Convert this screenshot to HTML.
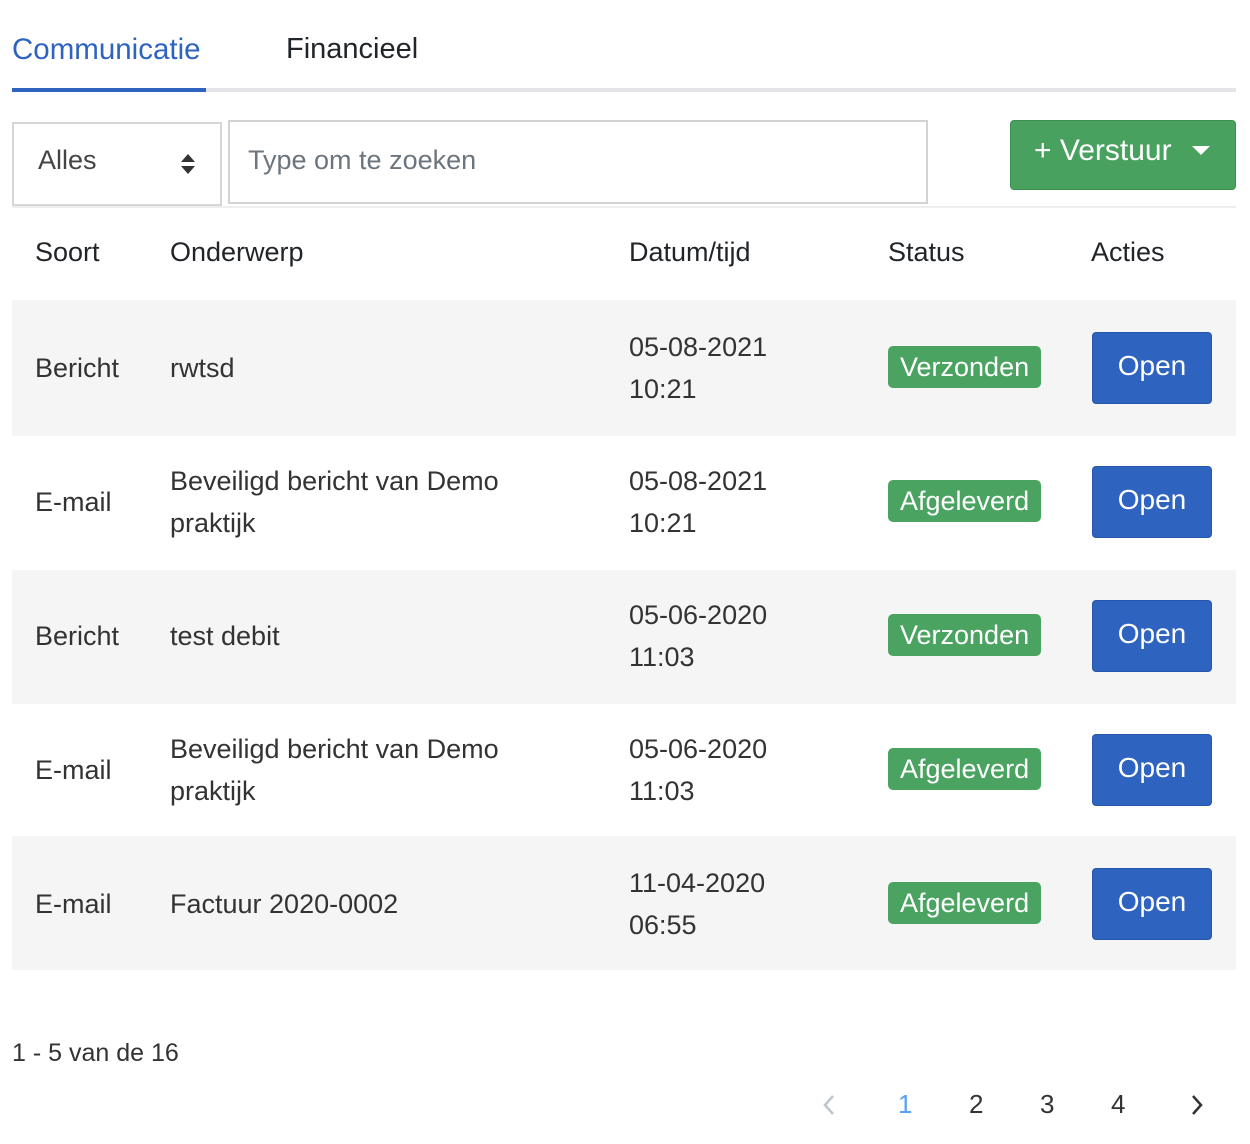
<!DOCTYPE html>
<html><head><meta charset="utf-8"><style>
*{box-sizing:border-box;margin:0;padding:0}
body{width:1250px;height:1144px;background:#fff;font-family:"Liberation Sans",sans-serif;color:#212529;position:relative;overflow:hidden}
.a{position:absolute;white-space:nowrap}
.t{font-size:27px}
.row{position:absolute;left:12px;width:1224px;height:134px}
.g{background:#f5f5f5}
.badge{position:absolute;left:888px;height:42px;background:#4aa361;color:#fff;font-size:27px;border-radius:5px;padding:0 12px;line-height:42px}
.btn{position:absolute;left:1092px;width:120px;height:72px;background:#2e63bf;border:1px solid #2457ad;border-radius:4px;color:#fff;font-size:28px;text-align:center;line-height:66px}
</style></head><body>
<div class="a t" style="left:12px;top:33px;color:#2e63bf;font-size:29.5px">Communicatie</div>
<div class="a t" style="left:286px;top:33px;font-size:29px">Financieel</div>
<div class="a" style="left:12px;top:88px;width:1224px;height:4px;background:#e3e5e8"></div>
<div class="a" style="left:12px;top:88px;width:194px;height:4px;background:#2e63bf"></div>

<div class="a" style="left:12px;top:122px;width:210px;height:84px;border:2px solid #d6d6d6"></div>
<div class="a t" style="left:38px;top:145px;color:#444">Alles</div>
<svg class="a" style="left:179px;top:153px" width="18" height="22"><path d="M2 9 L9 1 L16 9Z M2 13 L9 21 L16 13Z" fill="#333"/></svg>
<div class="a" style="left:228px;top:120px;width:700px;height:84px;border:2px solid #d3d3d3"></div>
<div class="a t" style="left:248px;top:145px;color:#6c757d">Type om te zoeken</div>
<div class="a" style="left:1010px;top:120px;width:226px;height:70px;background:#48a15e;border:1px solid #3d8f52;border-radius:4px"></div>
<div class="a" style="left:1034px;top:134px;color:#fff;font-size:30px">+ Verstuur</div>
<svg class="a" style="left:1192px;top:146px" width="18" height="10"><path d="M0 0 H18 L9 9Z" fill="#fff"/></svg>
<div class="a" style="left:12px;top:206px;width:1224px;height:2px;background:#eee"></div>

<div class="a t" style="left:35px;top:237px">Soort</div>
<div class="a t" style="left:170px;top:237px">Onderwerp</div>
<div class="a t" style="left:629px;top:237px">Datum/tijd</div>
<div class="a t" style="left:888px;top:237px">Status</div>
<div class="a t" style="left:1091px;top:237px">Acties</div>

<div class="row g" style="top:300px;height:136px"></div>
<div class="row" style="top:436px"></div>
<div class="row g" style="top:570px"></div>
<div class="row" style="top:704px"></div>
<div class="row g" style="top:836px"></div>

<div class="a t" style="left:35px;top:353px;color:#333">Bericht</div>
<div class="a t" style="left:170px;top:353px;color:#333">rwtsd</div>
<div class="a t" style="left:629px;top:326px;line-height:42px;color:#333">05-08-2021<br>10:21</div>
<div class="badge" style="top:346px">Verzonden</div>
<div class="btn" style="top:332px">Open</div>

<div class="a t" style="left:35px;top:487px;color:#333">E-mail</div>
<div class="a t" style="left:170px;top:460px;line-height:42px;color:#333">Beveiligd bericht van Demo<br>praktijk</div>
<div class="a t" style="left:629px;top:460px;line-height:42px;color:#333">05-08-2021<br>10:21</div>
<div class="badge" style="top:480px">Afgeleverd</div>
<div class="btn" style="top:466px">Open</div>

<div class="a t" style="left:35px;top:621px;color:#333">Bericht</div>
<div class="a t" style="left:170px;top:621px;color:#333">test debit</div>
<div class="a t" style="left:629px;top:594px;line-height:42px;color:#333">05-06-2020<br>11:03</div>
<div class="badge" style="top:614px">Verzonden</div>
<div class="btn" style="top:600px">Open</div>

<div class="a t" style="left:35px;top:755px;color:#333">E-mail</div>
<div class="a t" style="left:170px;top:728px;line-height:42px;color:#333">Beveiligd bericht van Demo<br>praktijk</div>
<div class="a t" style="left:629px;top:728px;line-height:42px;color:#333">05-06-2020<br>11:03</div>
<div class="badge" style="top:748px">Afgeleverd</div>
<div class="btn" style="top:734px">Open</div>

<div class="a t" style="left:35px;top:889px;color:#333">E-mail</div>
<div class="a t" style="left:170px;top:889px;color:#333">Factuur 2020-0002</div>
<div class="a t" style="left:629px;top:862px;line-height:42px;color:#333">11-04-2020<br>06:55</div>
<div class="badge" style="top:882px">Afgeleverd</div>
<div class="btn" style="top:868px">Open</div>

<div class="a" style="left:12px;top:1039px;font-size:25px;color:#333">1 - 5 van de 16</div>
<svg class="a" style="left:822px;top:1094px" width="14" height="22"><path d="M11 2 L3 11 L11 20" stroke="#c0c4cc" stroke-width="2.5" fill="none"/></svg>
<div class="a" style="left:898px;top:1089px;font-size:26px;color:#5aa0f0">1</div>
<div class="a" style="left:969px;top:1089px;font-size:26px;color:#333">2</div>
<div class="a" style="left:1040px;top:1089px;font-size:26px;color:#333">3</div>
<div class="a" style="left:1111px;top:1089px;font-size:26px;color:#333">4</div>
<svg class="a" style="left:1190px;top:1094px" width="14" height="22"><path d="M3 2 L11 11 L3 20" stroke="#333" stroke-width="2.5" fill="none"/></svg>
</body></html>
